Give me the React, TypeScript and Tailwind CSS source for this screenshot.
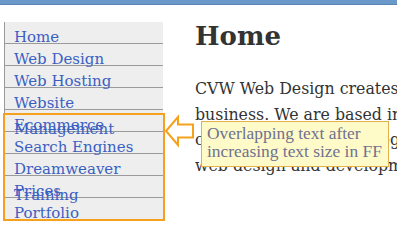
import React from "react";

const menu = [
  "Home",
  "Web Design",
  "Web Hosting",
  "Website Management",
  "Ecommerce",
  "Search Engines",
  "Dreamweaver Training",
  "Prices",
  "Portfolio",
];

export default function App() {
  return (
    <div
      className="relative h-[221px] w-[397px] overflow-hidden bg-white"
      style={{ fontFamily: '"DejaVu Serif", Georgia, serif' }}
    >
      <div className="h-[5px] bg-[#6b99c9] border-b border-[#5a86b6]" />
      <div className="flex pt-[17px]">
        <ul className="ml-[4px] w-[159px] shrink-0 border-l border-[#9a9a9a] bg-[#eeeeee]">
          {menu.map((m) => (
            <li
              key={m}
              className="h-[22px] border-b border-[#9a9a9a] pl-[9px] pt-[3px] text-[15px] leading-[25.6px] text-[#3a60c2]"
            >
              {m}
            </li>
          ))}
        </ul>
        <div className="ml-[32px] min-w-0 flex-1 overflow-hidden text-[#333333]">
          <h1 className="whitespace-nowrap text-[26px] font-bold leading-[28px] text-[#333333]">
            Home
          </h1>
          <p className="mt-[26px] whitespace-nowrap text-[15.8px] leading-[25.6px]">
            <span className="block">CVW Web Design creates websites for small</span>
            <span className="block">business. We are based in Charlotte, NC</span>
            <span className="block">companies across the region, offering</span>
            <span className="block">web design and development services.</span>
          </p>
        </div>
      </div>

      <div className="absolute left-[3px] top-[113px] h-[108px] w-[162px] border-2 border-[#f6a11d]" />

      <svg
        className="absolute left-[160px] top-[112px]"
        width="40"
        height="38"
        viewBox="160 112 40 38"
      >
        <polygon
          points="166,131 178,117 178,124.5 193,124.5 193,137.5 178,137.5 178,145"
          fill="#ffffff"
          stroke="#f6a11d"
          strokeWidth="2"
          strokeLinejoin="miter"
        />
      </svg>

      <div
        className="absolute left-[201px] top-[121px] h-[46px] w-[188px] border border-[#e3b04e] bg-[#fffbc8] pl-[5px] pt-[3px] text-[17.4px] leading-[17.5px] text-[#6f7190]"
        style={{ fontFamily: '"Liberation Serif", Georgia, serif' }}
      >
        <div className="whitespace-nowrap">Overlapping text after</div>
        <div className="whitespace-nowrap">increasing text size in FF</div>
      </div>
    </div>
  );
}
